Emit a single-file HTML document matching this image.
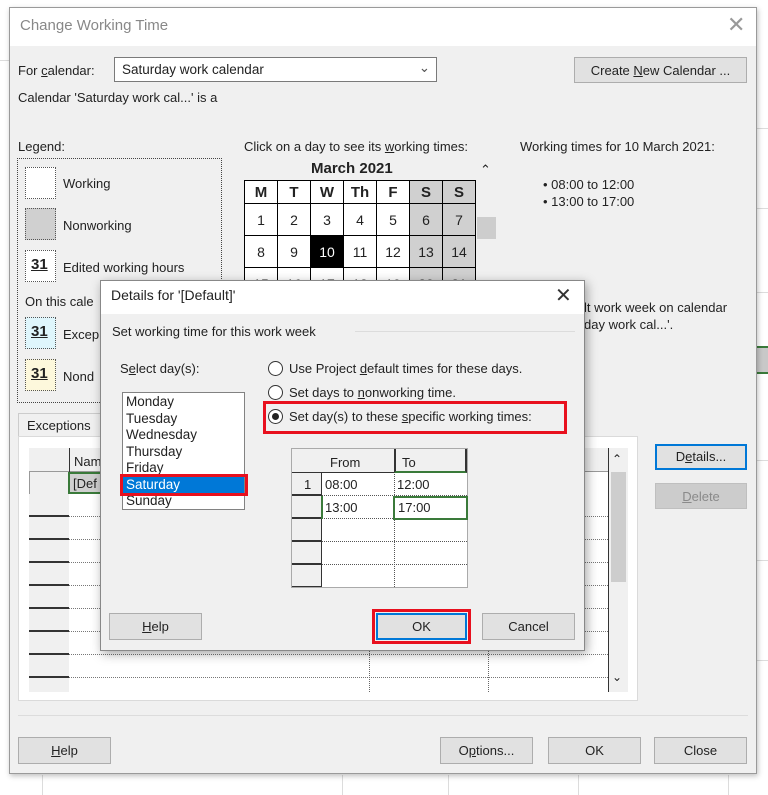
<!DOCTYPE html>
<html><head><meta charset="utf-8"><style>
*{box-sizing:border-box;margin:0;padding:0}
body{width:768px;height:795px;position:relative;overflow:hidden;background:#fff;font-family:"Liberation Sans",sans-serif;font-size:13px;color:#222}
.a{position:absolute}
.btn{position:absolute;background:#e1e1e1;border:1px solid #adadad;text-align:center;line-height:25px;font-size:13px;color:#222}
.gl{position:absolute;background:#dcdcdc}
u{text-decoration:underline}
.sw{position:absolute;left:25px;width:31px;height:32px;border:1px dotted #555}
.cal td{border:1px solid #000;width:33px;height:32px;text-align:center;font-size:14px;background:#fff}
.cal{border-collapse:collapse;position:absolute;left:244px;top:180px}
.cal th{border:1px solid #000;height:23px;font-size:15px;background:#fff}
.g{background:#d0d0d0 !important}
.dl{position:absolute;left:69px;width:539px;height:1px;border-top:1px dotted #777}
</style></head><body>
<div class="gl" style="left:0;top:60px;width:9px;height:1px"></div>
<div class="gl" style="left:756px;top:128px;width:12px;height:1px"></div>
<div class="gl" style="left:756px;top:208px;width:12px;height:1px"></div>
<div class="gl" style="left:756px;top:292px;width:12px;height:1px"></div>
<div class="gl" style="left:756px;top:460px;width:12px;height:1px"></div>
<div class="gl" style="left:756px;top:560px;width:12px;height:1px"></div>
<div class="gl" style="left:756px;top:660px;width:12px;height:1px"></div>
<div class="gl" style="left:42px;top:775px;width:1px;height:20px"></div>
<div class="gl" style="left:342px;top:775px;width:1px;height:20px"></div>
<div class="gl" style="left:448px;top:775px;width:1px;height:20px"></div>
<div class="gl" style="left:578px;top:775px;width:1px;height:20px"></div>
<div class="gl" style="left:728px;top:775px;width:1px;height:20px"></div>
<div class="a" style="left:756px;top:346px;width:12px;height:28px;background:#c8c8c8;border-top:2px solid #3a7a3a;border-bottom:2px solid #3a7a3a"></div>

<div class="a" style="left:9px;top:7px;width:748px;height:767px;background:#f0f0f0;border:1px solid #9a9a9a;box-shadow:1px 2px 5px rgba(0,0,0,.25)"></div>
<div class="a" style="left:10px;top:8px;width:746px;height:38px;background:#fff"></div>
<div class="a" style="left:20px;top:17px;font-size:15px;color:#888">Change Working Time</div>
<div class="a" style="left:727px;top:12px;font-size:22px;color:#999;font-weight:100">✕</div>

<div class="a" style="left:18px;top:63px">For <u>c</u>alendar:</div>
<div class="a" style="left:114px;top:57px;width:323px;height:25px;background:#fff;border:1px solid #7a7a7a;padding:4px 7px;font-size:13.5px">Saturday work calendar<span style="position:absolute;right:6px;top:2px;color:#555">&#8964;</span></div>
<div class="btn" style="left:574px;top:57px;width:173px;height:26px">Create <u>N</u>ew Calendar ...</div>
<div class="a" style="left:18px;top:90px">Calendar 'Saturday work cal...' is a</div>

<div class="a" style="left:18px;top:139px">Legend:</div>
<div class="a" style="left:17px;top:158px;width:205px;height:245px;border:1px dotted #444"></div>
<div class="sw" style="top:167px;background:#fff"></div><div class="a" style="left:63px;top:176px">Working</div>
<div class="sw" style="top:208px;background:#d0d0d0"></div><div class="a" style="left:63px;top:218px">Nonworking</div>
<div class="sw" style="top:250px;background:#fff"><b style="position:absolute;left:5px;top:5px;font-size:15px;text-decoration:underline">31</b></div><div class="a" style="left:63px;top:260px">Edited working hours</div>
<div class="a" style="left:25px;top:294px">On this cale</div>
<div class="sw" style="top:317px;background:#dff6fc"><b style="position:absolute;left:5px;top:5px;font-size:15px;text-decoration:underline">31</b></div><div class="a" style="left:63px;top:327px">Excep</div>
<div class="sw" style="top:359px;background:#fdf8dc"><b style="position:absolute;left:5px;top:5px;font-size:15px;text-decoration:underline">31</b></div><div class="a" style="left:63px;top:369px">Nond</div>

<div class="a" style="left:244px;top:139px">Click on a day to see its <u>w</u>orking times:</div>
<div class="a" style="left:311px;top:160px;font-weight:bold;font-size:15px">March 2021</div>
<div class="a" style="left:480px;top:162px;font-size:13px">&#8963;</div>
<div class="a" style="left:477px;top:217px;width:19px;height:22px;background:#cdcdcd"></div>
<table class="cal"><tr><th>M</th><th>T</th><th>W</th><th>Th</th><th>F</th><th class="g">S</th><th class="g">S</th></tr>
<tr><td>1</td><td>2</td><td>3</td><td>4</td><td>5</td><td class="g">6</td><td class="g">7</td></tr>
<tr><td>8</td><td>9</td><td style="background:#000;color:#fff">10</td><td>11</td><td>12</td><td class="g">13</td><td class="g">14</td></tr>
<tr><td>15</td><td>16</td><td>17</td><td>18</td><td>19</td><td class="g">20</td><td class="g">21</td></tr></table>

<div class="a" style="left:520px;top:139px">Working times for 10 March 2021:</div>
<div class="a" style="left:543px;top:176px;line-height:17px">• 08:00 to 12:00<br>• 13:00 to 17:00</div>
<div class="a" style="left:584px;top:299px;line-height:17px">lt work week on calendar<br>day work cal...'.</div>

<div class="a" style="left:18px;top:413px;width:84px;height:25px;background:#f0f0f0;border:1px solid #ccc;border-bottom:none;padding:4px 8px">Exceptions</div>
<div class="a" style="left:18px;top:436px;width:620px;height:265px;background:#fff;border:1px solid #dadada"></div>
<div class="a" style="left:29px;top:448px;width:40px;height:244px;background:#f0f0f0;border-right:1px solid #333;border-left:1px solid #999"></div>
<div class="a" style="left:29px;top:448px;width:580px;height:24px;border-bottom:1px solid #999;background:#f0f0f0"></div>
<div class="a" style="left:69px;top:448px;width:1px;height:24px;background:#333"></div>
<div class="a" style="left:74px;top:454px">Nam</div>
<div class="a" style="left:68px;top:472px;width:40px;height:22px;border:2px solid #3a7a3a;background:#d0d0d0;padding:2px 3px">[Def</div>
<div class="a" style="left:29px;top:494px;width:40px;height:198px;background:repeating-linear-gradient(#f0f0f0 0 21px,#333 21px 23px)"></div>
<div class="dl" style="top:516px"></div><div class="dl" style="top:539px"></div><div class="dl" style="top:562px"></div>
<div class="dl" style="top:585px"></div><div class="dl" style="top:608px"></div><div class="dl" style="top:631px"></div>
<div class="dl" style="top:654px"></div><div class="dl" style="top:677px"></div>
<div class="a" style="left:369px;top:640px;width:1px;height:52px;border-left:1px dotted #666"></div>
<div class="a" style="left:488px;top:640px;width:1px;height:52px;border-left:1px dotted #666"></div>
<div class="a" style="left:608px;top:448px;width:20px;height:244px;background:#f0f0f0;border-left:1px solid #333"></div>
<div class="a" style="left:611px;top:472px;width:15px;height:110px;background:#cdcdcd"></div>
<div class="a" style="left:612px;top:452px;font-size:12px">&#8963;</div>
<div class="a" style="left:612px;top:670px;font-size:12px">&#8964;</div>
<div class="btn" style="left:655px;top:444px;width:92px;height:26px;border:2px solid #0078d7;line-height:22px">D<u>e</u>tails...</div>
<div class="btn" style="left:655px;top:483px;width:92px;height:26px;background:#cccccc;border-color:#bfbfbf;color:#8a8a8a"><u>D</u>elete</div>

<div class="a" style="left:18px;top:715px;width:730px;height:1px;background:#dcdcdc"></div>
<div class="btn" style="left:18px;top:737px;width:93px;height:27px"><u>H</u>elp</div>
<div class="btn" style="left:440px;top:737px;width:93px;height:27px">O<u>p</u>tions...</div>
<div class="btn" style="left:548px;top:737px;width:93px;height:27px">OK</div>
<div class="btn" style="left:654px;top:737px;width:93px;height:27px">Close</div>

<div class="a" style="left:100px;top:280px;width:485px;height:371px;background:#f0f0f0;border:1px solid #888;box-shadow:2px 3px 10px rgba(0,0,0,.35)"></div>
<div class="a" style="left:101px;top:281px;width:483px;height:33px;background:#fff"></div>
<div class="a" style="left:111px;top:287px;font-size:14px">Details for '[Default]'</div>
<div class="a" style="left:555px;top:283px;font-size:20px;color:#333">✕</div>
<div class="a" style="left:112px;top:324px">Set working time for this work week</div>
<div class="a" style="left:355px;top:331px;width:220px;height:1px;background:#dcdcdc"></div>
<div class="a" style="left:120px;top:361px">S<u>e</u>lect day(s):</div>
<div class="a" style="left:122px;top:392px;width:123px;height:118px;background:#fff;border:1px solid #828282;padding:1px 3px;line-height:16.5px;font-size:13.5px">Monday<br>Tuesday<br>Wednesday<br>Thursday<br>Friday<br><span style="display:block;margin:0 -3px;padding-left:3px;background:#0078d7;color:#fff">Saturday</span>Sunday</div>
<div class="a" style="left:120px;top:474px;width:128px;height:22px;border:3px solid #e8101e"></div>

<div class="a" style="left:268px;top:361px;width:15px;height:15px;border:1px solid #333;border-radius:50%;background:#fff"></div>
<div class="a" style="left:289px;top:361px">Use Project <u>d</u>efault times for these days.</div>
<div class="a" style="left:268px;top:385px;width:15px;height:15px;border:1px solid #333;border-radius:50%;background:#fff"></div>
<div class="a" style="left:289px;top:385px">Set days to <u>n</u>onworking time.</div>
<div class="a" style="left:263px;top:401px;width:304px;height:33px;border:3px solid #e8101e"></div>
<div class="a" style="left:268px;top:409px;width:15px;height:15px;border:1px solid #333;border-radius:50%;background:#fff"><div style="position:absolute;left:3px;top:3px;width:7px;height:7px;border-radius:50%;background:#222"></div></div>
<div class="a" style="left:289px;top:409px">Set day(s) to these <u>s</u>pecific working times:</div>

<div class="a" style="left:291px;top:448px;width:177px;height:140px;background:#fff;border:1px solid #aaa"></div>
<div class="a" style="left:292px;top:449px;width:175px;height:24px;background:#f0f0f0;border-bottom:1px solid #333"></div>
<div class="a" style="left:292px;top:449px;width:30px;height:138px;background:repeating-linear-gradient(#f0f0f0 0 21px,#333 21px 23px);background-position:0 24px;border-right:1px solid #333"></div>
<div class="a" style="left:292px;top:449px;width:30px;height:24px;background:#f0f0f0;border-bottom:1px solid #333"></div>
<div class="a" style="left:394px;top:449px;width:1px;height:138px;border-left:1px dotted #555"></div>
<div class="a" style="left:322px;top:495px;width:145px;height:1px;border-top:1px dotted #555"></div>
<div class="a" style="left:322px;top:518px;width:145px;height:1px;border-top:1px dotted #555"></div>
<div class="a" style="left:322px;top:541px;width:145px;height:1px;border-top:1px dotted #555"></div>
<div class="a" style="left:322px;top:564px;width:145px;height:1px;border-top:1px dotted #555"></div>
<div class="a" style="left:394px;top:449px;width:73px;height:24px;border-right:2px solid #333;border-bottom:2px solid #3a7a3a;border-left:2px solid #333"></div>
<div class="a" style="left:330px;top:455px">From</div>
<div class="a" style="left:402px;top:455px">To</div>
<div class="a" style="left:304px;top:477px">1</div>
<div class="a" style="left:325px;top:477px">08:00</div>
<div class="a" style="left:397px;top:477px">12:00</div>
<div class="a" style="left:321px;top:496px;width:2px;height:23px;background:#3a7a3a"></div>
<div class="a" style="left:325px;top:500px">13:00</div>
<div class="a" style="left:393px;top:496px;width:75px;height:24px;border:2px solid #3a7a3a;padding:2px 3px">17:00</div>

<div class="btn" style="left:109px;top:613px;width:93px;height:27px"><u>H</u>elp</div>
<div class="a" style="left:372px;top:609px;width:99px;height:35px;border:3px solid #e8101e"></div>
<div class="btn" style="left:376px;top:613px;width:91px;height:27px;border:2px solid #0078d7;line-height:23px">OK</div>
<div class="btn" style="left:482px;top:613px;width:93px;height:27px">Cancel</div>
</body></html>
